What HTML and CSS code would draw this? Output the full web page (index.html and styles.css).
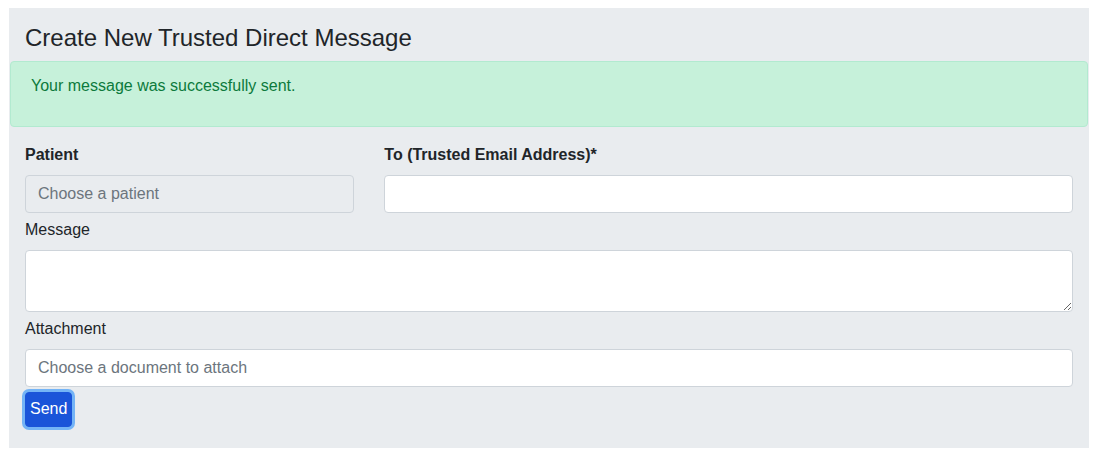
FILE: index.html
```html
<!DOCTYPE html>
<html lang="en">
<head>
<meta charset="utf-8">
<title>Create New Trusted Direct Message</title>
<link rel="stylesheet" href="styles.css">
</head>
<body>
<div class="panel">
  <h4 class="title">Create New Trusted Direct Message</h4>
  <div class="alert">
    <p class="alert-text">Your message was successfully sent.</p>
  </div>
  <form class="form">
    <div class="row">
      <div class="col col-4">
        <label class="label bold">Patient</label>
        <input class="control disabled" type="text" placeholder="Choose a patient" disabled>
      </div>
      <div class="col col-8">
        <label class="label bold">To (Trusted Email Address)*</label>
        <input class="control" type="text">
      </div>
    </div>
    <label class="label">Message</label>
    <textarea class="control textarea" rows="2"></textarea>
    <label class="label">Attachment</label>
    <input class="control" type="text" placeholder="Choose a document to attach">
    <button class="btn" type="button">Send</button>
  </form>
</div>
</body>
</html>
```
FILE: styles.css
```css
* { box-sizing: border-box; }
html, body { background: #ffffff; }
body {
  margin: 8px 4px 8px 9px;
  font-family: "Liberation Sans", Arial, sans-serif;
  font-size: 16px;
  line-height: 24px;
  color: #212529;
}
.panel {
  width: 1080px;
  background: #e9ecef;
  padding: 15px 16px 16px 16px;
}
.title {
  margin: 0 0 9px 0;
  font-size: 24px;
  line-height: 29px;
  font-weight: 400;
  color: #212529;
}
.alert {
  margin: 0 -15px 0 -15px;
  background: #c6f1da;
  border: 1px solid #b2ead0;
  border-radius: 4px;
  padding: 12px 20px 12px 20px;
  color: #0c7a3c;
}
.alert-text { margin: 0 0 16px 0; }
.form {
  margin: 16px 0 5px 0;
  display: flex;
  flex-direction: column;
  align-items: flex-start;
}
.row {
  display: flex;
  margin: 0 -15px;
  width: calc(100% + 30px);
}
.col { padding: 0 15px; display: flex; flex-direction: column; }
.col-4 { width: 33.3333%; }
.col-8 { width: 66.6667%; }
.label {
  display: block;
  margin: 0 0 8px 0;
  line-height: 24px;
}
.bold { font-weight: 700; }
.control {
  display: block;
  width: 100%;
  height: 38px;
  margin: 0 0 5px 0;
  padding: 6px 12px;
  font-family: inherit;
  font-size: 16px;
  line-height: 24px;
  color: #495057;
  background: #ffffff;
  border: 1px solid #ced4da;
  border-radius: 4px;
}
.control::placeholder { color: #6c757d; opacity: 1; }
.control.disabled { background: #e9ecef; }
.textarea { height: 62px; resize: vertical; }
.btn {
  margin: 0;
  padding: 4px 4px 5px 4px;
  font-family: inherit;
  font-size: 16px;
  line-height: 24px;
  color: #ffffff;
  background: #1a54d9;
  border: 1px solid #1a54d9;
  border-radius: 4px;
  box-shadow: 0 0 0 3px #74b4f6;
}
```
